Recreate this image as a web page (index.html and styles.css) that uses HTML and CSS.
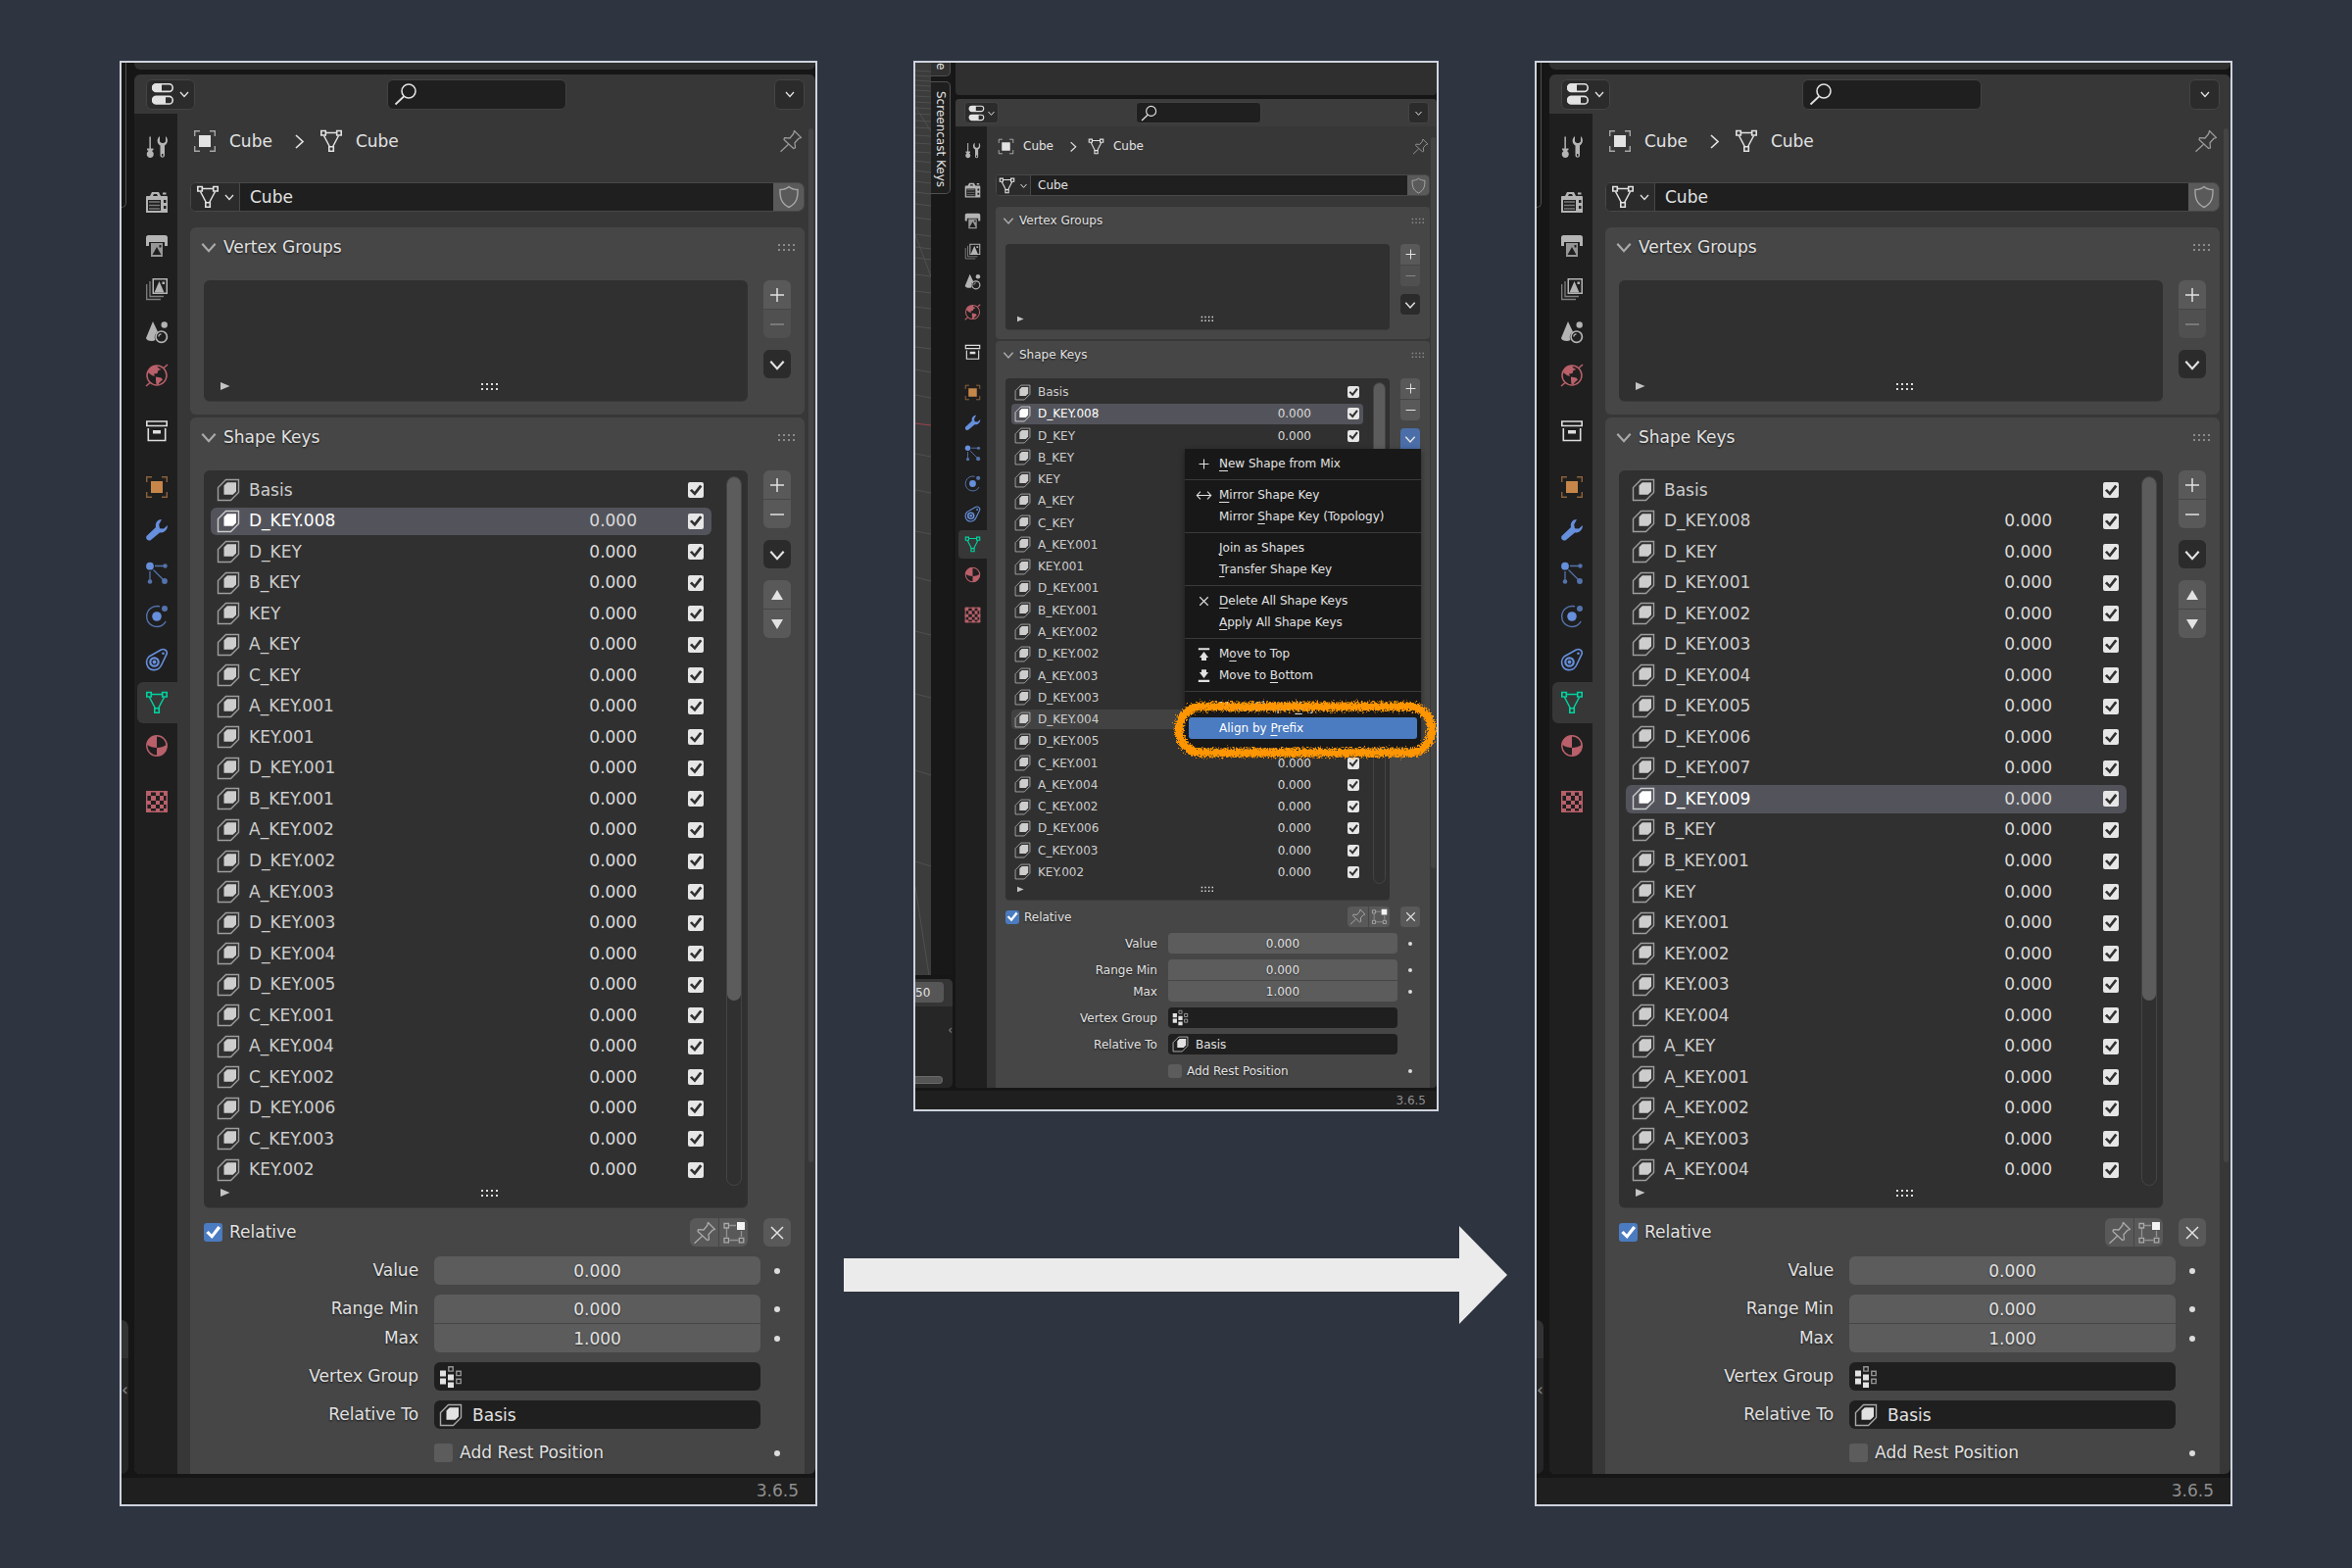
FILE: index.html
```html
<!DOCTYPE html>
<html lang="en">
<head>
    <meta charset="utf-8">
    <title>Align Shape Keys by Prefix</title>
    <link rel="stylesheet" href="styles.css">
</head>
<body>
    <svg class="sprite" aria-hidden="true">
        <symbol id="editor" viewBox="0 0 24 24">
            <rect x="1.8" y="1.8" width="20.4" height="7.6" rx="3.6" fill="none" stroke="currentColor" stroke-width="1.6"/>
            <path d="M5 1.5h6v8H5a4 4 0 0 1 0-8z" fill="currentColor"/>
            <rect x="1.8" y="14.4" width="20.4" height="7.6" rx="3.6" fill="none" stroke="currentColor" stroke-width="1.6"/>
            <path d="M5 14h10v8H5a4 4 0 0 1 0-8z" fill="currentColor"/>
        </symbol>
        <symbol id="down" viewBox="0 0 12 12"><path d="M2 4l4 4.500l4-4.500" fill="none" stroke="currentColor" stroke-width="1.300"/></symbol>
        <symbol id="right" viewBox="0 0 12 18"><path d="M2 3l7 6.500l-7 6.500" fill="none" stroke="currentColor" stroke-width="1.700"/></symbol>
        <symbol id="search" viewBox="0 0 24 24">
            <circle cx="15" cy="9" r="7" fill="none" stroke="currentColor" stroke-width="1.600"/>
            <path d="M10 14.500L1.500 22.500" stroke="currentColor" stroke-width="1.800"/>
        </symbol>
        <symbol id="object" viewBox="0 0 24 24">
            <path d="M1.700 7V1.700H7M17 1.700h5.300V7M22.300 17v5.300H17M7 22.300H1.700V17" fill="none" stroke="currentColor" stroke-width="1.400" opacity=".65"/>
            <rect x="6" y="6" width="12" height="12" fill="currentColor"/>
        </symbol>
        <symbol id="mesh" viewBox="0 0 24 24">
            <path d="M6.500 3.500h11M4.500 6.500l5.800 11M19.500 6.500l-5.800 11" stroke="currentColor" stroke-width="1.500"/>
            <path d="M1.800 1.500h4.500v4.500H1.800zM17.700 1.500h4.500v4.500h-4.500zM9.800 17.800h4.500v4.500H9.800z" fill="none" stroke="currentColor" stroke-width="1.600"/>
        </symbol>
        <symbol id="pin" viewBox="0 0 24 24">
            <path d="M15.500 1.500l7 7-2.500.8-4 4.500.5 5-1.800.7-9.700-9 .5-1.800 5.500.3 3.700-4.500zM9.300 15.500L1.500 22.700" fill="none" stroke="currentColor" stroke-width="1.300" stroke-linejoin="round"/>
        </symbol>
        <symbol id="shield" viewBox="0 0 24 24">
            <path d="M12 1.500c2.500 2.200 6 3 9 3 .2 8-1 14-9 18-8-4-9.200-10-9-18 3 0 6.500-.8 9-3z" fill="none" stroke="currentColor" stroke-width="1.400"/>
        </symbol>
        <symbol id="key" viewBox="0 0 24 24">
            <path d="M9.500 1.500h13v13l-8 8h-13V9.500z" fill="none" stroke="currentColor" stroke-width="1.400" opacity=".7"/>
            <path d="M10.800 4.200h9.200v9.300l-3.300 3.300H7.500V7.500z" fill="currentColor"/>
        </symbol>
        <symbol id="plus" viewBox="0 0 24 24"><path d="M12 5v14M5 12h14" stroke="currentColor" stroke-width="1.500"/></symbol>
        <symbol id="minus" viewBox="0 0 24 24"><path d="M5 12h14" stroke="currentColor" stroke-width="1.700"/></symbol>
        <symbol id="cross" viewBox="0 0 24 24"><path d="M6 6l12 12M18 6L6 18" stroke="currentColor" stroke-width="1.500"/></symbol>
        <symbol id="up-tri" viewBox="0 0 24 24"><path d="M12 7l6 10H6z" fill="currentColor"/></symbol>
        <symbol id="down-tri" viewBox="0 0 24 24"><path d="M12 17L6 7h12z" fill="currentColor"/></symbol>
        <symbol id="play" viewBox="0 0 10 10"><path d="M0 1l9.500 4L0 9z" fill="currentColor"/></symbol>
        <symbol id="grip" viewBox="0 0 18 8"><path d="M1 1h2v2H1zM6 1h2v2H6zM11 1h2v2h-2zM16 1h2v2h-2zM1 6h2v2H1zM6 6h2v2H6zM11 6h2v2h-2zM16 6h2v2h-2z" fill="currentColor"/></symbol>
        <symbol id="editmode" viewBox="0 0 24 24">
            <path d="M7 4.500h7M4.500 7.500v9M7.500 19.500h9M19.500 10v6" stroke="currentColor" stroke-width="1.300" opacity=".7"/>
            <path d="M2 2.500h4.500v4.500H2zM2 17.300h4.500v4.500H2zM17.300 17.300h4.500v4.500h-4.500z" fill="none" stroke="currentColor" stroke-width="1.300"/>
            <path d="M15 1h8v8h-8z" fill="#f4f4f4"/>
        </symbol>
        <symbol id="vgroup" viewBox="0 0 24 24">
            <path d="M1 5.500h6v6H1zM1 13.500h6v6H1zM9 9.500h6v6H9zM9 17.500h6v5.500H9z" fill="currentColor"/>
            <path d="M9.800 1.700h4.400v4.400H9.800zM17.800 6.200h4.400v4.400h-4.400zM17.800 14.200h4.400v4.400h-4.400z" fill="none" stroke="currentColor" stroke-width="1.400" opacity=".6"/>
        </symbol>
        <symbol id="mirror" viewBox="0 0 24 24"><path d="M2 12h20M7 6.500L1.800 12 7 17.500M17 6.500l5.200 5.500-5.200 5.500" fill="none" stroke="currentColor" stroke-width="1.500"/></symbol>
        <symbol id="top" viewBox="0 0 24 24"><path d="M4 3h16v3H4zM12 8.500l6.500 8.500h-3v4h-7v-4h-3z" fill="currentColor"/></symbol>
        <symbol id="bottom" viewBox="0 0 24 24"><path d="M4 18h16v3H4zM12 15.500L5.500 7h3V3h7v4h3z" fill="currentColor"/></symbol>

        <symbol id="tool" viewBox="0 0 24 24">
            <path d="M4.400 1.500h1.500v12H4.400zM2 13.500h6.500v1.500l-1.500 1c2 1.500 2.500 4 .8 6-1.300 1.300-3.800 1.300-5 0-1.700-2-1.300-4.500.7-6L2 15z" fill="currentColor"/>
            <path fill-rule="evenodd" d="M15 1v5.500l2 1.500h2l2-1.500V1c2.500 2 3 7-1 9.500V21a2.300 2.300 0 0 1-4.500 0V10.500C11.500 8 12 3 15 1zM17 19v2.500h1.500V19z" fill="currentColor"/>
        </symbol>
        <symbol id="render" viewBox="0 0 24 24">
            <path fill-rule="evenodd" d="M5 5l2-4h7l2 4h6a1 1 0 0 1 1 1v16H1V6a1 1 0 0 1 1-1zM8 5h5l-1-2H9zM3 9v11h13V9zM19 9v3h2.500V9zM19 15v3h2.500v-3zM18 1.500h3.500v2H18z" fill="currentColor"/>
            <path d="M4 11h11M4 14.500h11M4 18h11" stroke="currentColor" stroke-width="1.300" opacity=".6"/>
        </symbol>
        <symbol id="output" viewBox="0 0 24 24">
            <path d="M1 3.500A2.500 2.500 0 0 1 3.500 1h17A2.500 2.500 0 0 1 23 3.500V12h-3V8H4v4H1z" fill="currentColor"/>
            <path fill-rule="evenodd" d="M6 9h12v14H6zM7.500 21h9l-4.500-8zM14.500 11v2.500h2V11z" fill="currentColor" opacity=".8"/>
        </symbol>
        <symbol id="view" viewBox="0 0 24 24">
            <path fill-rule="evenodd" d="M7.500 1H23v16H7.500zM9 2.500v13h12.500v-13z" fill="currentColor"/>
            <path d="M9.500 15.500l5-11.500 5 11.500zM17.500 4.500h2.500v2.500h-2.500z" fill="currentColor"/>
            <path d="M5 4v15.500h14M1.700 7v15.500H16" fill="none" stroke="currentColor" stroke-width="1.300" opacity=".65"/>
        </symbol>
        <symbol id="scene" viewBox="0 0 24 24">
            <path d="M8 1l5 10.500c-3 2-4 5-2.500 8.500-3 1.800-9 .8-9.500-2z" fill="currentColor"/>
            <circle cx="19.700" cy="4.500" r="3.200" fill="currentColor"/>
            <circle cx="16.700" cy="16.700" r="5.700" fill="none" stroke="currentColor" stroke-width="1.700"/>
            <path d="M13.800 16.500a3 3 0 0 1 2.700-2.700" fill="none" stroke="currentColor" stroke-width="1.300"/>
        </symbol>
        <symbol id="world" viewBox="0 0 24 24">
            <circle cx="12" cy="12" r="10" fill="none" stroke="currentColor" stroke-width="1.500"/>
            <path d="M19 4.500L23 1M5 19.500L1 23" stroke="currentColor" stroke-width="1.600"/>
            <path d="M3 9c1-4 4.500-7 9-7l1.500 2.500 3 1.500-3 1-1 3-3.500.5 1 2.500-3-1zM11 13.500l5.500 1 1.500 2-3 2.500-1.500 2.500-2-.5-.5-4z" fill="currentColor"/>
        </symbol>
        <symbol id="collection" viewBox="0 0 24 24">
            <path d="M1.800 2h20.400v4.500H1.800zM3.300 9v12.500h17.400V9" fill="none" stroke="currentColor" stroke-width="1.600"/>
            <path d="M8 11h8v3.500H8z" fill="currentColor"/>
        </symbol>
        <symbol id="modifier" viewBox="0 0 24 24">
            <path d="M17 1c-4 0-7 3.500-6 8L1.500 18c-1 1.500 0 4 2 4.500 1 .2 2 0 2.500-.5L15 14.500c4 .5 8-2.500 8-7.500L19 10.500l-4-.3-.8-4z" fill="currentColor"/>
        </symbol>
        <symbol id="particles" viewBox="0 0 24 24">
            <circle cx="5" cy="4.700" r="3.900" fill="currentColor"/>
            <g opacity=".75"><path d="M10 4.500h9M5 10v10M8.500 8.500l11 11" stroke="currentColor" stroke-width="1.300"/>
            <circle cx="20.500" cy="4.500" r="2.200" fill="currentColor"/><circle cx="5" cy="20.500" r="2.300" fill="currentColor"/><circle cx="20" cy="20" r="2.900" fill="currentColor"/></g>
        </symbol>
        <symbol id="physics" viewBox="0 0 24 24">
            <circle cx="12" cy="12" r="4.800" fill="currentColor"/>
            <g opacity=".75"><path d="M15 1.800C7 0 1.700 6 1.700 12c0 8 8 12.500 15 9.500 2-1 3.500-2.500 4.500-4.500" fill="none" stroke="currentColor" stroke-width="1.400"/>
            <circle cx="20" cy="4" r="3" fill="currentColor"/></g>
        </symbol>
        <symbol id="constraint" viewBox="0 0 24 24">
            <path d="M4 9L16 2.200c3.500-2 7 .8 6.200 4L16.500 18c-3 6-11 6-13.800 1C1 15.500 1.500 11.500 4 9z" fill="none" stroke="currentColor" stroke-width="1.600"/>
            <circle cx="9.500" cy="14.500" r="4.200" fill="none" stroke="currentColor" stroke-width="2.200"/>
            <circle cx="9.500" cy="14.500" r="1.900" fill="currentColor"/><circle cx="18.500" cy="5.700" r="1.300" fill="currentColor"/>
        </symbol>
        <symbol id="material" viewBox="0 0 24 24">
            <circle cx="12" cy="12" r="10.200" fill="none" stroke="currentColor" stroke-width="1.500"/>
            <path d="M12 1.500V14c-3.500 0-7-.8-10.300-3.500C2.500 5 6.500 1.500 12 1.500zM12 14c3.500 0 7-.8 10.300-3.500.5 7-4.300 12-10.300 12z" fill="currentColor"/>
        </symbol>
        <symbol id="texture" viewBox="0 0 24 24">
            <path d="M1 1h5v5H1zM11 1h4v5h-4zM19 1h4v5h-4zM6 6h5v5H6zM15 6h4v5h-4zM1 11h5v4H1zM11 11h4v4h-4zM19 11h4v4h-4zM6 15h5v4H6zM15 15h4v4h-4zM1 19h5v4H1zM11 19h4v4h-4zM19 19h4v4h-4z" fill="currentColor"/>
            <path d="M1.700 1.700h20.600v20.600H1.700z" fill="none" stroke="currentColor" stroke-width="1.400"/>
        </symbol>
    </svg>

    <main class="board">
        <section class="shot" data-panel="before"></section>
        <div class="middle">
            <section class="shot small" data-panel="menu"></section>
            <div class="arrow"></div>
        </div>
        <section class="shot" data-panel="after"></section>
    </main>

    <script src="script.js"></script>
</body>
</html>
```

FILE: styles.css
```css
* {
    box-sizing: border-box;
}

body {
    margin: 0;
    min-height: 100vh;
    background-color: #2e3440;
    font-family: "DejaVu Sans", Verdana, sans-serif;
    color: #e2e2e2;
}

button, input {
    font: inherit;
    color: inherit;
    margin: 0;
    padding: 0;
    border: none;
    background: none;
}

svg {
    display: block;
    flex: none;
}

.sprite {
    position: absolute;
    width: 0;
    height: 0;
}

.board {
    display: grid;
    grid-template-columns: 712fr 536fr 712fr;
    gap: 98px;
    align-items: start;
    padding: 62px 122px 60px;
}

.arrow {
    height: 100px;
    margin: 117px -70px 0 -71px;
    background-color: #ebebeb;
    clip-path: polygon(0 33%, calc(100% - 49px) 33%, calc(100% - 49px) 0, 100% 50%, calc(100% - 49px) 100%, calc(100% - 49px) 67%, 0 67%);
}

/* sizes of the big windows; .small overrides them */
.shot {
    --text: 17px;
    --icon: 24px;
    --chevron: 12px;
    --side: 13px;
    --upper: 7px;
    --edge: 5px;
    --header: 40px;
    --head-btn: 50px;
    --ctl: 29px;
    --btn: 28px;
    --radius: 6px;
    --pad: 14px;
    --gap: 16px;
    --tab: 42px;
    --tab-strip: 44px;
    --tab-gap: 13px;
    --row-gap: 3px;
    --check: 16px;
    --field-gap: 10px;
    border: 2px solid #ced3dd;
    background-color: #161616;
    font-size: var(--text);
    line-height: 1;
}

.shot.small {
    --text: 12px;
    --icon: 17px;
    --chevron: 9px;
    --side: 41px;
    --upper: 33px;
    --edge: 4px;
    --header: 28px;
    --head-btn: 35px;
    --ctl: 21px;
    --btn: 20px;
    --radius: 4px;
    --pad: 10px;
    --gap: 11px;
    --tab: 29px;
    --tab-strip: 32px;
    --tab-gap: 10px;
    --row-gap: 2px;
    --check: 12px;
    --field-gap: 6px;
}

.icon {
    width: var(--icon);
    height: var(--icon);
}

.chevron {
    width: var(--chevron);
    height: var(--chevron);
}

.workspace {
    display: flex;
}

.side {
    flex: none;
    width: var(--side);
    display: flex;
    flex-direction: column;
    justify-content: space-between;
}

.main {
    flex: 1;
    min-width: 0;
}

.upper {
    height: var(--upper);
    margin-bottom: var(--edge);
    background-color: #2f2f2f;
    border-radius: 0 0 var(--radius) var(--radius);
}

/* neighbouring editors cut off at the left */
.side-tab {
    width: 5px;
    height: 148px;
    border: solid #505050;
    border-width: 0 1px 1px 0;
    border-radius: 0 0 5px 0;
}

.side-timeline {
    width: 7px;
    height: 157px;
    border-top: 39px solid #333;
    border-radius: 0 7px 7px 0;
    background-color: #262626;
    color: #888;
    overflow: hidden;
    padding-top: 24px;
}

.viewport {
    flex: 1;
    display: flex;
    width: 38px;
    margin-bottom: 4px;
    background-color: #181818;
    border-radius: 0 0 5px 0;
}

.viewport svg {
    background-color: #3c3c3c;
}

.side-labels {
    width: 20px;
}

.side-label {
    display: flex;
    align-items: center;
    height: 115px;
    width: 20px;
    padding: 9px 0;
    margin-bottom: 5px;
    writing-mode: vertical-rl;
    border: 1px solid #505050;
    border-left: none;
    border-radius: 0 5px 5px 0;
    background-color: #1f1f1f;
    justify-content: flex-start;
    white-space: nowrap;
}

.side-label.cut {
    height: 14px;
    padding: 0;
    border-top: none;
    background-color: #303030;
    border-radius: 0 0 5px 0;
}

.timeline {
    display: flex;
    flex-direction: column;
    width: 38px;
    height: 111px;
    padding-bottom: 4px;
    background-color: #262626;
    border-radius: 0 5px 5px 0;
    overflow: hidden;
}

.timeline-head {
    height: 28px;
    padding: 3px 9px 4px 0;
    background-color: #353535;
}

.timeline-head input {
    width: 100%;
    height: 21px;
    background-color: #565656;
    border-radius: 0 4px 4px 0;
}

.timeline-body {
    flex: 1;
    padding-top: 18px;
    text-align: right;
    color: #888;
}

.timeline-bar {
    width: 28px;
    height: 8px;
    background-color: #555;
    border: 1px solid #6a6a6a;
    border-left: none;
    border-radius: 0 4px 4px 0;
}

.props {
    background-color: #373737;
    border-radius: var(--radius);
    overflow: hidden;
}

.header {
    display: flex;
    align-items: center;
    justify-content: space-between;
    height: var(--header);
    padding: 0 11px 0 12px;
}

.small .header {
    background-color: #3c3c3c;
    padding: 0 8px 0 9px;
}

.dark-btn {
    display: flex;
    align-items: center;
    justify-content: center;
    gap: 4px;
    height: var(--ctl);
    background-color: #2b2b2b;
    border: 1px solid #444;
    border-radius: var(--radius);
}

.header .dark-btn, .header .search {
    height: 31px;
}

.small .header .dark-btn, .small .header .search {
    height: 22px;
}

.editor-btn {
    width: var(--head-btn);
}

.small .editor-btn {
    gap: 2px;
}

.header-menu {
    width: 31px;
}

.small .header-menu {
    width: 21px;
}

.search {
    display: flex;
    align-items: center;
    width: 183px;
    margin-right: 16px;
    padding-left: 6px;
    background-color: #1f1f1f;
    border: 1px solid #424242;
    border-radius: var(--radius);
}

.small .search {
    width: 128px;
    margin-right: 11px;
    padding-left: 4px;
}

.search input {
    flex: 1;
    min-width: 0;
}

.body {
    display: flex;
}

.tabs {
    flex: none;
    width: var(--tab-strip);
    padding: 13px 0 0 3px;
    background-color: #1f1f1f;
    color: #b4b4b4;
}

.small .tabs {
    padding-top: 10px;
}

.tab {
    display: flex;
    align-items: center;
    width: 100%;
    height: var(--tab);
    margin-bottom: 2px;
    padding-left: 8px;
    border-radius: var(--radius) 0 0 var(--radius);
}

.small .tab {
    padding-left: 6px;
}

.tab.group {
    margin-top: calc(var(--tab-gap) + 2px);
}

.tab.active {
    background-color: #373737;
}

.tab.red {
    color: #b9606a;
}

.tab.orange {
    color: #c6864a;
}

.tab.blue {
    color: #668fdc;
}

.tab.green {
    color: #00d4a0;
}

.tab.light {
    color: #dedede;
}

.content {
    flex: 1;
    min-width: 0;
    position: relative;
    padding: 0 11px 0 13px;
}

.small .content {
    padding: 0 7px 0 9px;
}

/* scrollbar of the whole editor, over the right padding */
.content::after {
    content: "";
    position: absolute;
    top: 15px;
    right: 2px;
    width: 5px;
    height: 76%;
    border-radius: 3px;
    background-color: #444;
}

.small .content::after {
    top: 11px;
    right: 1px;
}

.crumbs {
    display: flex;
    align-items: center;
    height: 56px;
    margin-bottom: 14px;
    padding: 0 2px 0 3px;
    gap: 14px;
}

.small .crumbs {
    height: 40px;
    margin-bottom: 9px;
    padding: 0 1px 0 2px;
    gap: 10px;
}

.crumbs .arrow-right {
    width: 12px;
    height: 18px;
    margin-left: 8px;
}

.small .crumbs .arrow-right {
    width: 9px;
    height: 13px;
    margin-left: 6px;
}

.crumbs .icon + span {
    margin-left: -1px;
}

.crumbs .pin {
    margin-left: auto;
    color: #999;
}

.name-row {
    display: flex;
    height: 30px;
    margin-bottom: 16px;
    border: 1px solid #484848;
    border-radius: var(--radius);
    background-color: #1f1f1f;
    overflow: hidden;
}

.small .name-row {
    height: 22px;
    margin-bottom: 11px;
}

.name-row .dark-btn {
    width: var(--head-btn);
    height: auto;
    border: none;
    border-right: 1px solid #484848;
    border-radius: 0;
}

.name-row input {
    flex: 1;
    min-width: 0;
    padding-left: 10px;
}

.small .name-row input {
    padding-left: 7px;
}

.shield {
    display: flex;
    align-items: center;
    justify-content: center;
    width: 31px;
    background-color: #5a5a5a;
    color: #a6a6a6;
}

.small .shield {
    width: 22px;
}

.panel {
    margin-bottom: var(--row-gap);
    padding: 0 var(--pad) var(--pad);
    background-color: #464646;
    border-radius: var(--radius);
}

.panel:last-child {
    margin-bottom: 0;
    padding-bottom: 7px;
    border-radius: var(--radius) var(--radius) 0 0;
}

.panel-head {
    display: flex;
    align-items: center;
    height: var(--header);
    margin-bottom: var(--pad);
    font-size: var(--text);
    font-weight: normal;
    text-shadow: 0 1px 2px rgba(0, 0, 0, 0.7);
}

.panel h2 {
    margin: 0;
    font: inherit;
}

.panel-head .chevron {
    width: 20px;
    height: 20px;
    margin: 0 5px 0 -5px;
    color: #aaa;
}

.small .panel-head .chevron {
    width: 14px;
    height: 14px;
    margin: 0 4px 0 -4px;
}

.panel-head .grip {
    margin-left: auto;
    margin-right: -4px;
    color: #8a8a8a;
}

.grip {
    width: 18px;
    height: 8px;
}

.small .grip {
    width: 13px;
    height: 6px;
}

.list-row {
    display: flex;
    gap: var(--gap);
}

.list {
    flex: 1;
    min-width: 0;
    display: flex;
    flex-direction: column;
    justify-content: flex-end;
    background-color: #303030;
    border-radius: var(--radius);
    box-shadow: 0 1px 0 #3a3a3a;
}

.list.empty {
    height: 123px;
}

.small .list.empty {
    height: 87px;
}

.list-main {
    display: flex;
    gap: 15px;
    height: 724px;
    margin: 6px 6px 0 7px;
}

.small .list-main {
    gap: 10px;
    height: 512px;
    margin: 4px 4px 0 6px;
}

.keys {
    flex: 1;
    display: grid;
    grid-auto-rows: 1fr;
    gap: var(--row-gap);
    margin: 0;
    padding: 0 0 2px;
    list-style: none;
}

.key {
    display: flex;
    align-items: center;
    min-height: 0;
    padding: 0 8px 0 6px;
    border-radius: var(--radius);
    color: #cdcdcd;
}

.small .key {
    padding: 0 4px 0 3px;
}

.key label {
    flex: 1;
    margin-left: 9px;
}

.small .key label {
    margin-left: 7px;
}

.key .amount {
    margin-right: 52px;
    color: #dadada;
}

.small .key .amount {
    margin-right: 37px;
}

.key.selected {
    background-color: #53545b;
    color: #fff;
}

.key.hovered {
    background-color: #424242;
}

.scroll {
    width: 16px;
    border: 1px solid #444;
    border-radius: 8px;
}

.small .scroll {
    width: 13px;
}

.scroll div {
    height: 74%;
    border-radius: 8px;
    background-color: #5c5c5c;
}

.list-foot {
    display: flex;
    align-items: center;
    height: 22px;
    padding: 0 0 8px 17px;
    color: #ddd;
}

.list-foot .grip {
    margin: 0 auto;
}

.small .list-foot {
    height: 16px;
    padding: 0 0 6px 12px;
}

.list-foot .play {
    width: 10px;
    height: 10px;
    color: #c4c4c4;
}

.small .list-foot .play {
    width: 7px;
    height: 7px;
}

input[type="checkbox"] {
    appearance: none;
    flex: none;
    width: var(--check);
    height: var(--check);
    border-radius: 2px;
    background-color: #e6e6e6;
}

input[type="checkbox"]:checked::before {
    content: "";
    display: block;
    width: 100%;
    height: 100%;
    background-color: #303030;
    clip-path: polygon(12% 52%, 25% 42%, 42% 60%, 76% 16%, 90% 26%, 44% 84%);
}

input[type="checkbox"].box {
    width: 19px;
    height: 19px;
    border-radius: 3px;
    background-color: #5c5c5c;
}

.small input[type="checkbox"].box {
    width: 14px;
    height: 14px;
}

input[type="checkbox"].box:checked {
    background-color: #4b7bc0;
}

input[type="checkbox"].box:checked::before {
    background-color: #fff;
}

.side-btns {
    width: var(--btn);
    display: flex;
    flex-direction: column;
    gap: 12px;
}

.small .side-btns {
    gap: 8px;
}

.pair {
    display: flex;
    flex-direction: column;
    gap: 1px;
    border-radius: var(--radius);
    overflow: hidden;
}

.pair.across {
    flex-direction: row;
}

.btn {
    display: flex;
    align-items: center;
    justify-content: center;
    width: var(--btn);
    height: var(--ctl);
    background-color: #595959;
}

.pair.across .btn {
    width: calc(var(--btn) + 1px);
}

.btn:disabled {
    background-color: #505050;
    color: #868686;
}

.btn.single {
    border-radius: var(--radius);
}

.btn.muted {
    color: #aaa;
}

.side-btns .dark-btn {
    width: var(--btn);
    border: none;
}

.side-btns .chevron {
    width: 20px;
    height: 20px;
}

.small .side-btns .chevron {
    width: 14px;
    height: 14px;
}

.dark-btn.open {
    background-color: #4b6ea8;
    border-radius: 4px 4px 0 0;
}

.menu-anchor {
    position: relative;
}

.relative-row {
    display: flex;
    align-items: center;
    gap: var(--gap);
    height: var(--ctl);
    margin: 11px 0 var(--field-gap);
}

.small .relative-row {
    margin-top: 7px;
}

.tick {
    flex: 1;
    display: flex;
    align-items: center;
    gap: 7px;
    text-shadow: 0 1px 2px rgba(0, 0, 0, 0.7);
}

.tick.rest {
    height: var(--ctl);
}

.small .tick {
    gap: 5px;
}

.fields {
    display: grid;
    grid-template-columns: minmax(0, 7fr) minmax(0, 10fr) var(--btn);
    row-gap: var(--field-gap);
    align-items: center;
}

.field-label {
    padding-right: var(--gap);
    text-align: right;
    text-shadow: 0 1px 2px rgba(0, 0, 0, 0.7);
}

.field {
    width: calc(100% - 3px);
    height: var(--ctl);
    border-radius: var(--radius);
    background-color: #5c5c5c;
    text-align: center;
    text-shadow: 0 1px 2px rgba(0, 0, 0, 0.5);
}

.field.first {
    border-radius: var(--radius) var(--radius) 0 0;
}

.field.last {
    border-radius: 0 0 var(--radius) var(--radius);
    margin-top: calc(1px - var(--field-gap));
}

.field-label.last, .dot.last {
    margin-top: calc(1px - var(--field-gap));
}

.field.picker {
    display: flex;
    align-items: center;
    gap: 10px;
    padding-left: 5px;
    background-color: #1f1f1f;
}

.small .field.picker {
    gap: 7px;
    padding-left: 4px;
}

.field.picker input {
    flex: 1;
    min-width: 0;
}

.dot {
    width: 6px;
    height: 6px;
    justify-self: center;
    border-radius: 50%;
    background-color: #dcdcdc;
}

.small .dot {
    width: 4px;
    height: 4px;
}

.status {
    display: flex;
    align-items: center;
    justify-content: flex-end;
    height: 27px;
    margin-top: 4px;
    padding-right: 17px;
    background-color: #1f1f1f;
    color: #8e8e8e;
}

.small .status {
    height: 19px;
    margin-top: 3px;
    padding-right: 11px;
}

.menu {
    position: absolute;
    top: 100%;
    right: -1px;
    z-index: 2;
    width: 241px;
    padding: 4px 4px 9px;
    background-color: #181818;
    box-shadow: 0 2px 6px rgba(0, 0, 0, 0.4);
}

.menu hr {
    height: 1px;
    margin: 5px -4px 4px;
    border: none;
    background-color: #3a3a3a;
}

.menu-item {
    display: flex;
    align-items: center;
    gap: 7px;
    width: 100%;
    height: 22px;
    padding-left: 7px;
    text-align: left;
    white-space: pre;
}

.menu-item u {
    text-underline-offset: 3px;
}

.menu-item .more {
    width: 7px;
    height: 7px;
    margin-left: auto;
    margin-right: 6px;
}

.menu-item.current {
    border-radius: 3px;
    background-color: #4b7bc0;
    color: #fff;
}

/* hand-drawn ring round the last menu entry */
.ring {
    position: absolute;
    right: -18px;
    bottom: -13px;
    width: 274px;
    height: 64px;
    overflow: visible;
}
```

FILE: script.js
```js
const before = ['Basis', 'D_KEY.008', 'D_KEY', 'B_KEY', 'KEY', 'A_KEY', 'C_KEY', 'A_KEY.001', 'KEY.001',
    'D_KEY.001', 'B_KEY.001', 'A_KEY.002', 'D_KEY.002', 'A_KEY.003', 'D_KEY.003', 'D_KEY.004', 'D_KEY.005',
    'C_KEY.001', 'A_KEY.004', 'C_KEY.002', 'D_KEY.006', 'C_KEY.003', 'KEY.002'];

const after = ['Basis', 'D_KEY.008', 'D_KEY', 'D_KEY.001', 'D_KEY.002', 'D_KEY.003', 'D_KEY.004', 'D_KEY.005',
    'D_KEY.006', 'D_KEY.007', 'D_KEY.009', 'B_KEY', 'B_KEY.001', 'KEY', 'KEY.001', 'KEY.002', 'KEY.003',
    'KEY.004', 'A_KEY', 'A_KEY.001', 'A_KEY.002', 'A_KEY.003', 'A_KEY.004'];

// covered: first and last row that lie under the open menu
const panels = {
    before: { keys: before, selected: 'D_KEY.008' },
    menu: { keys: before, selected: 'D_KEY.008', hovered: 'D_KEY.004', menu: true, covered: [3, 16] },
    after: { keys: after, selected: 'D_KEY.009' }
};

const tabs = [
    ['tool', ''], ['render', 'group'], ['output', ''], ['view', ''], ['scene', ''], ['world', 'red'],
    ['collection', 'light group'], ['object', 'orange group'], ['modifier', 'blue'], ['particles', 'blue'],
    ['physics', 'blue'], ['constraint', 'blue'], ['mesh', 'green active'], ['material', 'red'],
    ['texture', 'red group']
];

// null is a separator
const menuItems = [
    ['plus', '<u>N</u>ew Shape from Mix'], null,
    ['mirror', '<u>M</u>irror Shape Key'], ['', 'Mirror <u>S</u>hape Key (Topology)'], null,
    ['', '<u>J</u>oin as Shapes'], ['', '<u>T</u>ransfer Shape Key'], null,
    ['cross', '<u>D</u>elete All Shape Keys'], ['', '<u>A</u>pply All Shape Keys'], null,
    ['top', 'M<u>o</u>ve to Top'], ['bottom', 'Move to <u>B</u>ottom'], null,
    ['', 'Move Shape <u>K</u>ey', 'sub'], ['', 'Align by <u>P</u>refix', 'current']
];

function icon(name, cls = 'icon') {
    return `<svg class="${cls}" aria-hidden="true">${name ? `<use href="#${name}"/>` : ''}</svg>`;
}

function keyRow(name, i, id, panel) {
    let cls = 'key';
    if (name === panel.selected) cls += ' selected';
    if (name === panel.hovered) cls += ' hovered';
    const hidden = panel.covered && i >= panel.covered[0] && i <= panel.covered[1];
    const value = i > 0 && !hidden ? '<span class="amount">0.000</span>' : '';
    return `<li class="${cls}">${icon('key')}<label for="${id}-k${i}">${name}</label>${value}
        <input type="checkbox" id="${id}-k${i}" checked></li>`;
}

function menu() {
    const items = menuItems.map(item => {
        if (!item) return '<hr>';
        const more = item[2] === 'sub' ? icon('play', 'more') : '';
        return `<button class="menu-item ${item[2] || ''}">${icon(item[0])}<span>${item[1]}</span>${more}</button>`;
    }).join('');
    return `<div class="menu">${items}
        <svg class="ring" viewBox="0 0 274 64">
            <filter id="rough" x="-5%" y="-20%" width="110%" height="140%">
                <feTurbulence type="fractalNoise" baseFrequency="0.6" numOctaves="3" seed="4"/>
                <feDisplacementMap in="SourceGraphic" scale="9" xChannelSelector="R" yChannelSelector="G"/>
            </filter>
            <g filter="url(#rough)" fill="none" stroke="#ff9500">
                <rect x="9" y="9" width="258" height="47" rx="23" stroke-width="9"/>
            </g>
        </svg></div>`;
}

function side(panel) {
    if (!panel.menu) {
        return '<div class="side"><div class="side-tab"></div><div class="side-timeline">&lsaquo;</div></div>';
    }
    // floor grid of the 3D view
    const ys = [8, 13, 18, 23, 28, 34, 40, 46, 52, 59, 66, 74, 82, 91, 100, 110, 121, 132, 144, 158, 175,
        188, 199, 216, 233, 249, 269, 290, 313, 339, 399, 436, 478, 525, 580, 644, 722, 815];
    const lines = ys.map(y => `M0 ${y}l16 ${1 + Math.round(y / 200)}`).join('');
    return `<div class="side">
        <div class="viewport">
            <svg width="16" height="931" viewBox="0 0 16 931">
                <path d="${lines}M0 45l16 25M0 176l16 42M0 841l14 90" stroke="#505050" fill="none"/>
                <path d="M0 368l16 2" stroke="#9c4450"/>
            </svg>
            <div class="side-labels">
                <div class="side-label cut">e</div>
                <div class="side-label">Screencast Keys</div>
            </div>
        </div>
        <div class="timeline">
            <div class="timeline-head"><input type="text" value="50" aria-label="End frame"></div>
            <div class="timeline-body">&lsaquo;</div>
            <div class="timeline-bar"></div>
        </div>
    </div>`;
}

function numberField(id, label, value, cls = '') {
    return `<label class="field-label ${cls}" for="${id}">${label}</label>
        <input class="field ${cls}" type="text" id="${id}" value="${value}"><span class="dot ${cls}"></span>`;
}

function pickerField(id, label, name, value) {
    return `<label class="field-label" for="${id}">${label}</label>
        <div class="field picker">${icon(name)}<input type="text" id="${id}" value="${value}"></div><span></span>`;
}

function listFoot() {
    return `<div class="list-foot">${icon('play', 'play')}${icon('grip', 'grip')}</div>`;
}

function panelHead(title) {
    return `<div class="panel-head">${icon('down', 'chevron')}<h2>${title}</h2>${icon('grip', 'grip')}</div>`;
}

function render(el) {
    const id = el.dataset.panel;
    const panel = panels[id];
    const moveBtns = `<div class="pair"><button class="btn" aria-label="Up">${icon('up-tri')}</button>
        <button class="btn" aria-label="Down">${icon('down-tri')}</button></div>`;

    el.innerHTML = `
    <div class="workspace">
        ${side(panel)}
        <div class="main">
            <div class="upper"></div>
            <div class="props">
                <div class="header">
                    <button class="dark-btn editor-btn" aria-label="Editor type">${icon('editor')}${icon('down', 'chevron')}</button>
                    <div class="search">${icon('search')}<input type="text" aria-label="Search"></div>
                    <button class="dark-btn header-menu" aria-label="Options">${icon('down', 'chevron')}</button>
                </div>
                <div class="body">
                    <nav class="tabs">
                        ${tabs.map(t => `<button class="tab ${t[1]}" aria-label="${t[0]}">${icon(t[0])}</button>`).join('')}
                    </nav>
                    <div class="content">
                        <div class="crumbs">
                            ${icon('object')}<span>Cube</span>${icon('right', 'arrow-right')}
                            ${icon('mesh')}<span>Cube</span>${icon('pin', 'icon pin')}
                        </div>
                        <div class="name-row">
                            <button class="dark-btn" aria-label="Browse mesh">${icon('mesh')}${icon('down', 'chevron')}</button>
                            <input type="text" value="Cube" aria-label="Name">
                            <button class="shield" aria-label="Fake user">${icon('shield')}</button>
                        </div>
                        <div class="panel">
                            ${panelHead('Vertex Groups')}
                            <div class="list-row">
                                <div class="list empty">${listFoot()}</div>
                                <div class="side-btns">
                                    <div class="pair">
                                        <button class="btn" aria-label="Add">${icon('plus')}</button>
                                        <button class="btn" aria-label="Remove" disabled>${icon('minus')}</button>
                                    </div>
                                    <button class="dark-btn" aria-label="Specials">${icon('down', 'chevron')}</button>
                                </div>
                            </div>
                        </div>
                        <div class="panel">
                            ${panelHead('Shape Keys')}
                            <div class="list-row">
                                <div class="list">
                                    <div class="list-main">
                                        <ul class="keys">${panel.keys.map((k, i) => keyRow(k, i, id, panel)).join('')}</ul>
                                        <div class="scroll"><div></div></div>
                                    </div>
                                    ${listFoot()}
                                </div>
                                <div class="side-btns">
                                    <div class="pair">
                                        <button class="btn" aria-label="Add">${icon('plus')}</button>
                                        <button class="btn" aria-label="Remove">${icon('minus')}</button>
                                    </div>
                                    <div class="menu-anchor">
                                        <button class="dark-btn ${panel.menu ? 'open' : ''}" aria-label="Specials">${icon('down', 'chevron')}</button>
                                        ${panel.menu ? menu() : ''}
                                    </div>
                                    ${panel.menu ? '' : moveBtns}
                                </div>
                            </div>
                            <div class="relative-row">
                                <label class="tick"><input class="box" type="checkbox" checked>Relative</label>
                                <div class="pair across">
                                    <button class="btn muted" aria-label="Pin">${icon('pin')}</button>
                                    <button class="btn muted" aria-label="Edit mode">${icon('editmode')}</button>
                                </div>
                                <button class="btn single" aria-label="Clear">${icon('cross')}</button>
                            </div>
                            <div class="fields">
                                ${numberField(id + '-value', 'Value', '0.000')}
                                ${numberField(id + '-min', 'Range Min', '0.000', 'first')}
                                ${numberField(id + '-max', 'Max', '1.000', 'last')}
                                ${pickerField(id + '-group', 'Vertex Group', 'vgroup', '')}
                                ${pickerField(id + '-to', 'Relative To', 'key', 'Basis')}
                                <span></span>
                                <label class="tick rest"><input class="box" type="checkbox">Add Rest Position</label>
                                <span class="dot"></span>
                            </div>
                        </div>
                    </div>
                </div>
            </div>
        </div>
    </div>
    <div class="status">3.6.5</div>`;
}

document.querySelectorAll('.shot').forEach(render);
```
